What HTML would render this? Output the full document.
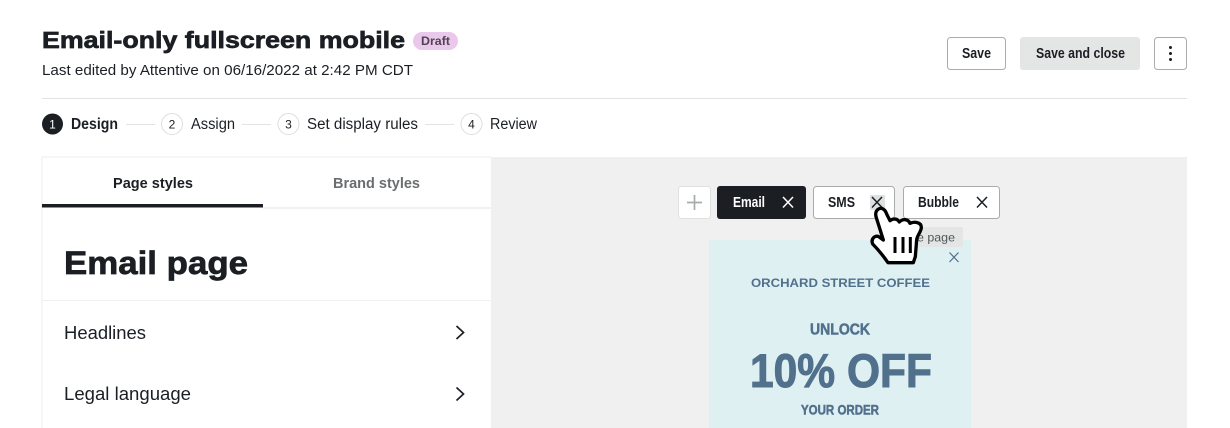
<!DOCTYPE html>
<html><head><meta charset="utf-8"><style>
html,body{margin:0;padding:0;background:#fff;width:1230px;height:428px;overflow:hidden}
svg{display:block}
text{font-family:"Liberation Sans",sans-serif;fill:#1b1f24}
.b{font-weight:700}
.h{stroke:#1b1f24;stroke-width:.7px}
.o{stroke:#50708c;stroke-width:.5px}
</style></head><body>
<svg width="1230" height="428" viewBox="0 0 1230 428" xmlns="http://www.w3.org/2000/svg">
<rect x="491" y="157" width="696" height="271" fill="#eff0ef"/>
<text class="b h" x="42" y="48" font-size="23.500" textLength="363" lengthAdjust="spacingAndGlyphs">Email-only fullscreen mobile</text>
<rect x="413" y="32" width="45" height="18" rx="9" fill="#eac8ec"/>
<text class="b" x="421" y="45" font-size="11.500" textLength="29" lengthAdjust="spacingAndGlyphs" style="fill:#4f4452">Draft</text>
<text x="42" y="75" font-size="15" textLength="371" lengthAdjust="spacingAndGlyphs">Last edited by Attentive on 06/16/2022 at 2:42 PM CDT</text>
<rect x="947.500" y="37.500" width="58" height="32" rx="3" fill="#fff" stroke="#a9acac"/>
<text class="b" x="962" y="58" font-size="14.500" textLength="29" lengthAdjust="spacingAndGlyphs">Save</text>
<rect x="1020" y="37" width="120" height="33" rx="3" fill="#e4e6e5"/>
<text class="b" x="1036" y="58" font-size="14.500" textLength="89" lengthAdjust="spacingAndGlyphs">Save and close</text>
<rect x="1154.500" y="37.500" width="32" height="32" rx="3" fill="#fff" stroke="#a9acac"/>
<circle cx="1170.500" cy="47.500" r="1.500" fill="#1b1f24"/><circle cx="1170.500" cy="53.500" r="1.500" fill="#1b1f24"/><circle cx="1170.500" cy="59.500" r="1.500" fill="#1b1f24"/>
<rect x="42" y="98" width="1145" height="1" fill="#e2e4e4"/>

<circle cx="52.500" cy="124" r="10.500" fill="#1b1f24"/>
<text x="52.500" y="128.500" font-size="12" text-anchor="middle" style="fill:#fff">1</text>
<text class="b" x="71" y="129" font-size="15.500" textLength="47" lengthAdjust="spacingAndGlyphs">Design</text>
<rect x="126" y="124" width="29" height="1" fill="#e2e4e4"/>
<circle cx="172" cy="124" r="10.500" fill="#fff" stroke="#dcdede"/>
<text x="172" y="128.500" font-size="12" text-anchor="middle">2</text>
<text x="191" y="129" font-size="15.500" textLength="44" lengthAdjust="spacingAndGlyphs">Assign</text>
<rect x="242" y="124" width="29" height="1" fill="#e2e4e4"/>
<circle cx="288.500" cy="124" r="10.500" fill="#fff" stroke="#dcdede"/>
<text x="288.500" y="128.500" font-size="12" text-anchor="middle">3</text>
<text x="307" y="129" font-size="15.500" textLength="111" lengthAdjust="spacingAndGlyphs">Set display rules</text>
<rect x="425" y="124" width="29" height="1" fill="#e2e4e4"/>
<circle cx="471.500" cy="124" r="10.500" fill="#fff" stroke="#dcdede"/>
<text x="471.500" y="128.500" font-size="12" text-anchor="middle">4</text>
<text x="490" y="129" font-size="15.500" textLength="47" lengthAdjust="spacingAndGlyphs">Review</text>

<rect x="42" y="157" width="449" height="271" fill="#fff"/>
<rect x="42" y="156.500" width="449" height="1" fill="#eceded"/>
<rect x="41.500" y="157" width="1" height="271" fill="#eceded"/>
<text class="b" x="113" y="188" font-size="15" textLength="80" lengthAdjust="spacingAndGlyphs">Page styles</text>
<text class="b" x="333" y="188" font-size="15" textLength="87" lengthAdjust="spacingAndGlyphs" style="fill:#6b6e70">Brand styles</text>
<rect x="42" y="204" width="221" height="3.500" fill="#1b1f24"/>
<rect x="263" y="207.500" width="228" height="1" fill="#e2e4e4"/>
<text class="b h" x="64" y="274" font-size="32" textLength="184" lengthAdjust="spacingAndGlyphs">Email page</text>
<rect x="42" y="300" width="449" height="1" fill="#eff0f0"/>
<text x="64" y="339" font-size="18" textLength="82" lengthAdjust="spacingAndGlyphs">Headlines</text>
<path d="M456.500 326l7 6.500-7 6.500" fill="none" stroke="#1b1f24" stroke-width="1.700"/>
<text x="64" y="400" font-size="18" textLength="127" lengthAdjust="spacingAndGlyphs">Legal language</text>
<path d="M456.500 387.500l7 6.500-7 6.500" fill="none" stroke="#1b1f24" stroke-width="1.700"/>

<rect x="678.500" y="186.500" width="32" height="32" rx="3" fill="#fff" stroke="#e0e2e2"/>
<path d="M694.500 195v15M687 202.500h15" stroke="#a9acac" stroke-width="1.700" fill="none"/>
<rect x="717" y="186" width="89" height="33" rx="3" fill="#1b1f24"/>
<text class="b" x="733" y="207" font-size="14.500" textLength="32" lengthAdjust="spacingAndGlyphs" style="fill:#fff">Email</text>
<path d="M783 197l10 10.500M793 197l-10 10.500" stroke="#fff" stroke-width="1.500" fill="none"/>
<rect x="813.500" y="186.500" width="81" height="32" rx="3" fill="#fff" stroke="#a9acac"/>
<text class="b" x="828" y="207" font-size="14.500" textLength="27" lengthAdjust="spacingAndGlyphs">SMS</text>
<rect x="870" y="195" width="15" height="15" rx="1" fill="#dfe1e1"/>
<path d="M872 197l10 10.500M882 197l-10 10.500" stroke="#1b1f24" stroke-width="1.500" fill="none"/>
<rect x="903.500" y="186.500" width="96" height="32" rx="3" fill="#fff" stroke="#a9acac"/>
<text class="b" x="918" y="207" font-size="14.500" textLength="41" lengthAdjust="spacingAndGlyphs">Bubble</text>
<path d="M977 197l10 10.500M987 197l-10 10.500" stroke="#1b1f24" stroke-width="1.500" fill="none"/>

<rect x="709" y="240" width="262" height="188" fill="#dff0f3"/>
<rect x="905" y="227" width="58" height="20" rx="2" fill="#e4e6e5"/>
<text x="917" y="241.500" font-size="12" textLength="38" lengthAdjust="spacingAndGlyphs" style="fill:#50565a">e page</text>
<path d="M949.500 252.500l9 9.500M958.500 252.500l-9 9.500" stroke="#50708c" stroke-width="1.200" fill="none"/>
<text class="b" x="751" y="287" font-size="12" textLength="179" lengthAdjust="spacingAndGlyphs" style="fill:#50708c">ORCHARD STREET COFFEE</text>
<text class="b o" x="810" y="334.500" font-size="16" textLength="60" lengthAdjust="spacingAndGlyphs" style="fill:#50708c">UNLOCK</text>
<text class="b o" x="750" y="387" font-size="47" textLength="182" lengthAdjust="spacingAndGlyphs" style="fill:#50708c;stroke-width:1px">10% OFF</text>
<text class="b o" x="801" y="414.500" font-size="13.500" textLength="78" lengthAdjust="spacingAndGlyphs" style="fill:#50708c">YOUR ORDER</text>

<g transform="translate(860 190) scale(.3333)">
<path d="M54 58C66 50 76 60 80 72L90 92C100 84 112 86 118 96C128 86 144 86 150 100C162 94 184 96 184 112C184 125 170 138 170 150L166 200L160 218H84C70 198 54 178 38 162C32 148 44 134 56 140L70 150L48 80C46 70 48 62 54 58Z" fill="#fff" stroke="#000" stroke-width="10" stroke-linejoin="round"/>
<path d="M105 141V189M129 141V189M151 141V189" stroke="#000" stroke-width="9" fill="none"/>
</g>
</svg>
</body></html>
